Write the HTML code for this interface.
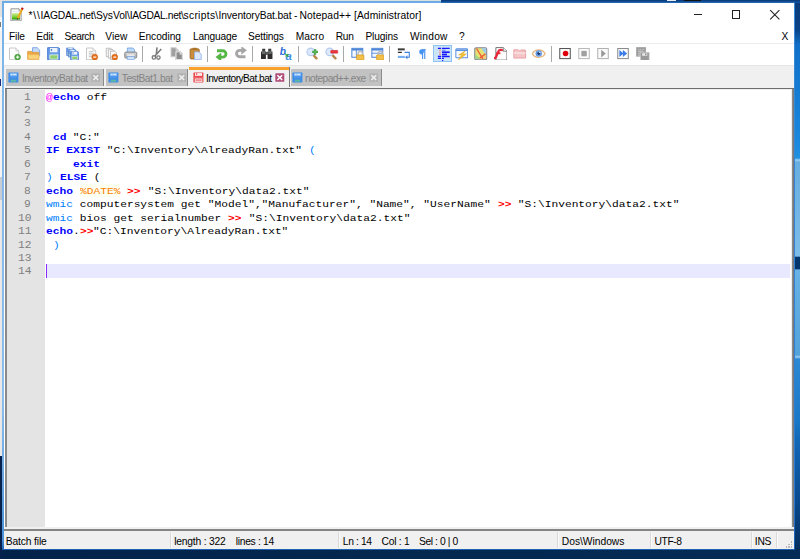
<!DOCTYPE html>
<html><head><meta charset="utf-8"><title>Notepad++</title><style>
html,body{margin:0;padding:0}
body{width:800px;height:559px;overflow:hidden;position:relative;background:#0e3a70}
#r{position:absolute;left:0;top:0;width:800px;height:559px;overflow:hidden}
#r div,#r span,#r svg{position:absolute}
.t{white-space:pre;line-height:0}
.s{font-family:"Liberation Sans",sans-serif}
.m{font-family:"Liberation Mono",monospace}
</style></head><body><div id="r">
<div style="left:0px;top:0px;width:800px;height:559px;background:linear-gradient(180deg,#0a3a78 0px,#0a4488 30px,#1070c8 45px,#1a88dc 140px,#2090e0 158px,#a0d0f0 160px,#68aee0 162px,#7cbce8 256px,#04366e 257.5px,#04366e 268.5px,#68b2e4 270px,#52a2da 355px,#9cccf0 357px,#2a88d4 359px,#1a78c8 420px,#1268b8 440px,#0a4a90 500px,#063468 540px,#04264e 559px);"></div>
<div style="left:0px;top:548px;width:800px;height:11px;background:linear-gradient(90deg,#03224a 0px,#04284f 400px,#052c56 800px);"></div>
<div style="left:0px;top:0px;width:441px;height:3px;background:#dedede;"></div>
<div style="left:441px;top:0px;width:359px;height:3px;background:linear-gradient(180deg,#0a3a78,#0e56a8);"></div>
<div style="left:667px;top:0px;width:9px;height:1.6px;background:#e8eef4;"></div>
<div style="left:684px;top:0px;width:17px;height:1.6px;background:#101010;"></div>
<div style="left:0px;top:0px;width:3px;height:17px;background:#e2e2e2;"></div>
<div style="left:0px;top:17px;width:3px;height:14px;background:#fafafa;"></div>
<div style="left:0.2px;top:22px;width:1.3px;height:4.6px;background:#7a7a7a;"></div>
<div style="left:0px;top:31px;width:3px;height:146px;background:#f4f4f4;"></div>
<div style="left:0px;top:78.5px;width:1.3px;height:7px;background:#1a2a80;"></div>
<div style="left:0px;top:177px;width:3px;height:23px;background:#c8ccd4;"></div>
<div style="left:0px;top:200px;width:3px;height:255.5px;background:#e8e8e8;"></div>
<div style="left:0px;top:455.5px;width:3px;height:104px;background:#06224c;"></div>
<div style="left:2.1px;top:1.4px;width:792.9px;height:549.0px;background:linear-gradient(180deg,#6cace6 0px,#80b6e8 60px,#8cbeec 400px,#4a90d8 540px,#1a60b0 549px);"></div>
<div style="left:441px;top:1.3px;width:354px;height:1.8px;background:linear-gradient(180deg,#0a3f80,#2f74c0);"></div>
<div style="left:3.9px;top:3.0px;width:790.0px;height:546.0px;background:#ffffff;"></div>
<div style="left:793.9px;top:3px;width:1.1px;height:546px;background:linear-gradient(180deg,#3a8adc,#2a7ad0 500px,#1a60b0);"></div>
<div style="left:693.8px;top:14.1px;width:8.6px;height:1px;background:#222;"></div>
<div style="left:731.8px;top:10px;width:8.4px;height:8.8px;background:transparent;border:1px solid #222;box-sizing:border-box"></div>
<svg style="left:768px;top:8px" width="14" height="14" viewBox="0 0 14 14"><path d="M2.2 2.2 L11.4 11.4 M11.4 2.2 L2.2 11.4" stroke="#222" stroke-width="1.05" fill="none"/></svg>
<div style="left:3.8px;top:43.0px;width:790.3px;height:0.9px;background:#ececec;"></div>
<div style="left:3.8px;top:65.0px;width:790.3px;height:23px;background:#f0f0f0;"></div>
<div style="left:3.8px;top:64.6px;width:790.3px;height:0.8px;background:#e6e6e6;"></div>
<div style="left:6.0px;top:68.9px;width:97.0px;height:17.2px;background:#c2c2c2;"></div>
<div style="left:103.0px;top:68.9px;width:1.2px;height:17.2px;background:#8a8a8a;"></div>
<div style="left:106.0px;top:68.9px;width:81.0px;height:17.2px;background:#c2c2c2;"></div>
<div style="left:187.0px;top:68.9px;width:1.2px;height:17.2px;background:#8a8a8a;"></div>
<div style="left:189.0px;top:66.6px;width:100.0px;height:21px;background:#f0f0f0;"></div>
<div style="left:189.0px;top:66.8px;width:100.0px;height:3.6px;background:#f8a22c;"></div>
<div style="left:289.0px;top:67px;width:1.2px;height:20px;background:#7a7a7a;"></div>
<div style="left:291.0px;top:68.9px;width:89.60000000000002px;height:17.2px;background:#c2c2c2;"></div>
<div style="left:380.6px;top:68.9px;width:1.2px;height:17.2px;background:#8a8a8a;"></div>
<div style="left:3.9px;top:526.5px;width:790.0px;height:4.2px;background:#f0f0f0;"></div>
<div style="left:5.1px;top:87.5px;width:788.6px;height:439.8px;background:#8a8a8a;"></div>
<div style="left:5.1px;top:87.5px;width:788.6px;height:1.8px;background:#6e6e6e;"></div>
<div style="left:792.6px;top:89.0px;width:1.1px;height:438.3px;background:#7a7a7a;"></div>
<div style="left:7.1px;top:89.3px;width:785.4px;height:438.0px;background:#efefef;"></div>
<div style="left:7.3px;top:89.5px;width:783.7px;height:437.7px;background:#ffffff;"></div>
<div style="left:7.3px;top:89.5px;width:37.7px;height:437.5px;background:#e4e4e4;"></div>
<div style="left:3.6px;top:529.2px;width:790.2px;height:1.7px;background:#848484;"></div>
<div style="left:46.0px;top:264.25px;width:743.8px;height:13.5px;background:#e8e8ff;"></div>
<div style="left:45.9px;top:264.3px;width:1.5px;height:13.4px;background:#8a2cff;"></div>
<div style="left:79.9px;top:183.51999999999998px;width:40.44px;height:13.4px;background:#fcfff0;"></div>
<div style="left:3.9px;top:530.7px;width:790.0px;height:18.4px;background:#f0f0f0;"></div>
<div style="left:170.0px;top:532.4px;width:1px;height:15.8px;background:#d9d9d9;"></div>
<div style="left:171.0px;top:532.4px;width:0.8px;height:15.8px;background:#fafafa;"></div>
<div style="left:338.0px;top:532.4px;width:1px;height:15.8px;background:#d9d9d9;"></div>
<div style="left:339.0px;top:532.4px;width:0.8px;height:15.8px;background:#fafafa;"></div>
<div style="left:557.0px;top:532.4px;width:1px;height:15.8px;background:#d9d9d9;"></div>
<div style="left:558.0px;top:532.4px;width:0.8px;height:15.8px;background:#fafafa;"></div>
<div style="left:650.0px;top:532.4px;width:1px;height:15.8px;background:#d9d9d9;"></div>
<div style="left:651.0px;top:532.4px;width:0.8px;height:15.8px;background:#fafafa;"></div>
<div style="left:750.5px;top:532.4px;width:1px;height:15.8px;background:#d9d9d9;"></div>
<div style="left:751.5px;top:532.4px;width:0.8px;height:15.8px;background:#fafafa;"></div>
<div style="left:775.5px;top:532.4px;width:1px;height:15.8px;background:#d9d9d9;"></div>
<div style="left:776.5px;top:532.4px;width:0.8px;height:15.8px;background:#fafafa;"></div>
<div style="left:790.8px;top:546.3px;width:1.4px;height:1.4px;background:#b8b8b8;"></div>
<div style="left:788.3px;top:546.3px;width:1.4px;height:1.4px;background:#b8b8b8;"></div>
<div style="left:785.8px;top:546.3px;width:1.4px;height:1.4px;background:#b8b8b8;"></div>
<div style="left:790.8px;top:543.8px;width:1.4px;height:1.4px;background:#b8b8b8;"></div>
<div style="left:788.3px;top:543.8px;width:1.4px;height:1.4px;background:#b8b8b8;"></div>
<div style="left:790.8px;top:541.3px;width:1.4px;height:1.4px;background:#b8b8b8;"></div>
<span class="t s" style="left:28.40px;top:16px;font-size:10.3px;color:#000;letter-spacing:0.822px;">*\\</span>
<span class="t s" style="left:40.60px;top:16px;font-size:10.3px;color:#000;letter-spacing:-0.219px;">IAGDAL.net\</span>
<span class="t s" style="left:96.00px;top:16px;font-size:10.3px;color:#000;letter-spacing:-0.078px;">SysVol\</span>
<span class="t s" style="left:129.80px;top:16px;font-size:10.3px;color:#000;letter-spacing:-0.374px;">IAGDAL.net\</span>
<span class="t s" style="left:183.50px;top:16px;font-size:10.3px;color:#000;letter-spacing:0.297px;">scripts\</span>
<span class="t s" style="left:218.50px;top:16px;font-size:10.3px;color:#000;letter-spacing:-0.130px;">InventoryBat.bat</span>
<span class="t s" style="left:291.40px;top:16px;font-size:10.3px;color:#000;letter-spacing:-0.319px;"> - </span>
<span class="t s" style="left:299.60px;top:16px;font-size:10.3px;color:#000;letter-spacing:0.057px;">Notepad++ </span>
<span class="t s" style="left:354.00px;top:16px;font-size:10.3px;color:#000;letter-spacing:0.067px;">[Administrator]</span>
<span class="t s" style="left:9.10px;top:37px;font-size:10.2px;color:#000;letter-spacing:-0.205px;">File</span>
<span class="t s" style="left:36.30px;top:37px;font-size:10.2px;color:#000;letter-spacing:-0.141px;">Edit</span>
<span class="t s" style="left:64.50px;top:37px;font-size:10.2px;color:#000;letter-spacing:-0.414px;">Search</span>
<span class="t s" style="left:105.30px;top:37px;font-size:10.2px;color:#000;letter-spacing:0.023px;">View</span>
<span class="t s" style="left:138.70px;top:37px;font-size:10.2px;color:#000;letter-spacing:-0.023px;">Encoding</span>
<span class="t s" style="left:193.10px;top:37px;font-size:10.2px;color:#000;letter-spacing:-0.166px;">Language</span>
<span class="t s" style="left:248.10px;top:37px;font-size:10.2px;color:#000;letter-spacing:-0.139px;">Settings</span>
<span class="t s" style="left:295.70px;top:37px;font-size:10.2px;color:#000;letter-spacing:0.058px;">Macro</span>
<span class="t s" style="left:335.70px;top:37px;font-size:10.2px;color:#000;letter-spacing:-0.234px;">Run</span>
<span class="t s" style="left:365.40px;top:37px;font-size:10.2px;color:#000;letter-spacing:-0.103px;">Plugins</span>
<span class="t s" style="left:409.90px;top:37px;font-size:10.2px;color:#000;letter-spacing:0.261px;">Window</span>
<span class="t s" style="left:459.00px;top:37px;font-size:10.2px;color:#000;letter-spacing:-0.672px;">?</span>
<span class="t s" style="left:781.50px;top:37px;font-size:10.2px;color:#000;letter-spacing:0.403px;">X</span>
<span class="t s" style="left:21.90px;top:79px;font-size:10.2px;color:#848484;letter-spacing:-0.525px;">InventoryBat.bat</span>
<span class="t s" style="left:121.80px;top:79px;font-size:10.2px;color:#848484;letter-spacing:-0.487px;">TestBat1.bat</span>
<span class="t s" style="left:205.90px;top:79px;font-size:10.2px;color:#000;letter-spacing:-0.525px;">InventoryBat.bat</span>
<span class="t s" style="left:305.00px;top:79px;font-size:10.2px;color:#848484;letter-spacing:-0.568px;">notepad++.exe</span>
<span class="t m" style="left:46.20px;top:98px;font-size:9.6px;color:#ff00ff;transform:scaleX(1.1701);transform-origin:0 0;">@</span>
<span class="t m" style="left:52.94px;top:98px;font-size:9.6px;color:#0000ff;font-weight:bold;transform:scaleX(1.1701);transform-origin:0 0;">echo</span>
<span class="t m" style="left:79.90px;top:98px;font-size:9.6px;color:#000;transform:scaleX(1.1701);transform-origin:0 0;"> off</span>
<span class="t m" style="left:52.94px;top:138px;font-size:9.6px;color:#0000ff;font-weight:bold;transform:scaleX(1.1701);transform-origin:0 0;">cd</span>
<span class="t m" style="left:66.42px;top:138px;font-size:9.6px;color:#000;transform:scaleX(1.1701);transform-origin:0 0;"> &quot;C:&quot;</span>
<span class="t m" style="left:46.20px;top:151px;font-size:9.6px;color:#0000ff;font-weight:bold;transform:scaleX(1.1701);transform-origin:0 0;">IF EXIST</span>
<span class="t m" style="left:100.12px;top:151px;font-size:9.6px;color:#000;transform:scaleX(1.1701);transform-origin:0 0;"> &quot;C:\Inventory\AlreadyRan.txt&quot; </span>
<span class="t m" style="left:309.06px;top:151px;font-size:9.6px;color:#0080ff;transform:scaleX(1.1701);transform-origin:0 0;">(</span>
<span class="t m" style="left:73.16px;top:165px;font-size:9.6px;color:#0000ff;font-weight:bold;transform:scaleX(1.1701);transform-origin:0 0;">exit</span>
<span class="t m" style="left:46.20px;top:178px;font-size:9.6px;color:#0080ff;transform:scaleX(1.1701);transform-origin:0 0;">)</span>
<span class="t m" style="left:59.68px;top:178px;font-size:9.6px;color:#0000ff;font-weight:bold;transform:scaleX(1.1701);transform-origin:0 0;">ELSE</span>
<span class="t m" style="left:86.64px;top:178px;font-size:9.6px;color:#000;transform:scaleX(1.1701);transform-origin:0 0;"> (</span>
<span class="t m" style="left:46.20px;top:192px;font-size:9.6px;color:#0000ff;font-weight:bold;transform:scaleX(1.1701);transform-origin:0 0;">echo</span>
<span class="t m" style="left:79.90px;top:192px;font-size:9.6px;color:#ff8000;transform:scaleX(1.1701);transform-origin:0 0;">%DATE%</span>
<span class="t m" style="left:127.08px;top:192px;font-size:9.6px;color:#ff0000;font-weight:bold;transform:scaleX(1.1701);transform-origin:0 0;">&gt;&gt;</span>
<span class="t m" style="left:140.56px;top:192px;font-size:9.6px;color:#000;transform:scaleX(1.1701);transform-origin:0 0;"> &quot;S:\Inventory\data2.txt&quot;</span>
<span class="t m" style="left:46.20px;top:205px;font-size:9.6px;color:#0080ff;transform:scaleX(1.1701);transform-origin:0 0;">wmic</span>
<span class="t m" style="left:73.16px;top:205px;font-size:9.6px;color:#000;transform:scaleX(1.1701);transform-origin:0 0;"> computersystem get &quot;Model&quot;,&quot;Manufacturer&quot;, &quot;Name&quot;, &quot;UserName&quot; </span>
<span class="t m" style="left:497.78px;top:205px;font-size:9.6px;color:#ff0000;font-weight:bold;transform:scaleX(1.1701);transform-origin:0 0;">&gt;&gt;</span>
<span class="t m" style="left:511.26px;top:205px;font-size:9.6px;color:#000;transform:scaleX(1.1701);transform-origin:0 0;"> &quot;S:\Inventory\data2.txt&quot;</span>
<span class="t m" style="left:46.20px;top:219px;font-size:9.6px;color:#0080ff;transform:scaleX(1.1701);transform-origin:0 0;">wmic</span>
<span class="t m" style="left:73.16px;top:219px;font-size:9.6px;color:#000;transform:scaleX(1.1701);transform-origin:0 0;"> bios get serialnumber </span>
<span class="t m" style="left:228.18px;top:219px;font-size:9.6px;color:#ff0000;font-weight:bold;transform:scaleX(1.1701);transform-origin:0 0;">&gt;&gt;</span>
<span class="t m" style="left:241.66px;top:219px;font-size:9.6px;color:#000;transform:scaleX(1.1701);transform-origin:0 0;"> &quot;S:\Inventory\data2.txt&quot;</span>
<span class="t m" style="left:46.20px;top:232px;font-size:9.6px;color:#0000ff;font-weight:bold;transform:scaleX(1.1701);transform-origin:0 0;">echo</span>
<span class="t m" style="left:73.16px;top:232px;font-size:9.6px;color:#000;transform:scaleX(1.1701);transform-origin:0 0;">.</span>
<span class="t m" style="left:79.90px;top:232px;font-size:9.6px;color:#ff0000;font-weight:bold;transform:scaleX(1.1701);transform-origin:0 0;">&gt;&gt;</span>
<span class="t m" style="left:93.38px;top:232px;font-size:9.6px;color:#000;transform:scaleX(1.1701);transform-origin:0 0;">&quot;C:\Inventory\AlreadyRan.txt&quot;</span>
<span class="t m" style="left:52.94px;top:246px;font-size:9.6px;color:#0080ff;transform:scaleX(1.1701);transform-origin:0 0;">)</span>
<span class="t m" style="left:24.26px;top:97px;font-size:11.8px;color:#808080;transform:scaleX(0.9520);transform-origin:0 0;">1</span>
<span class="t m" style="left:24.26px;top:110px;font-size:11.8px;color:#808080;transform:scaleX(0.9520);transform-origin:0 0;">2</span>
<span class="t m" style="left:24.26px;top:123px;font-size:11.8px;color:#808080;transform:scaleX(0.9520);transform-origin:0 0;">3</span>
<span class="t m" style="left:24.26px;top:137px;font-size:11.8px;color:#808080;transform:scaleX(0.9520);transform-origin:0 0;">4</span>
<span class="t m" style="left:24.26px;top:150px;font-size:11.8px;color:#808080;transform:scaleX(0.9520);transform-origin:0 0;">5</span>
<span class="t m" style="left:24.26px;top:164px;font-size:11.8px;color:#808080;transform:scaleX(0.9520);transform-origin:0 0;">6</span>
<span class="t m" style="left:24.26px;top:177px;font-size:11.8px;color:#808080;transform:scaleX(0.9520);transform-origin:0 0;">7</span>
<span class="t m" style="left:24.26px;top:191px;font-size:11.8px;color:#808080;transform:scaleX(0.9520);transform-origin:0 0;">8</span>
<span class="t m" style="left:24.26px;top:204px;font-size:11.8px;color:#808080;transform:scaleX(0.9520);transform-origin:0 0;">9</span>
<span class="t m" style="left:17.52px;top:218px;font-size:11.8px;color:#808080;transform:scaleX(0.9520);transform-origin:0 0;">10</span>
<span class="t m" style="left:17.52px;top:231px;font-size:11.8px;color:#808080;transform:scaleX(0.9520);transform-origin:0 0;">11</span>
<span class="t m" style="left:17.52px;top:245px;font-size:11.8px;color:#808080;transform:scaleX(0.9520);transform-origin:0 0;">12</span>
<span class="t m" style="left:17.52px;top:258px;font-size:11.8px;color:#808080;transform:scaleX(0.9520);transform-origin:0 0;">13</span>
<span class="t m" style="left:17.52px;top:271px;font-size:11.8px;color:#808080;transform:scaleX(0.9520);transform-origin:0 0;">14</span>
<span class="t s" style="left:5.80px;top:542px;font-size:10.3px;color:#000;letter-spacing:-0.156px;">Batch file</span>
<span class="t s" style="left:174.20px;top:542px;font-size:10.3px;color:#000;letter-spacing:-0.202px;">length : 322</span>
<span class="t s" style="left:235.80px;top:542px;font-size:10.3px;color:#000;letter-spacing:-0.322px;">lines : 14</span>
<span class="t s" style="left:342.80px;top:542px;font-size:10.3px;color:#000;letter-spacing:-0.386px;">Ln : 14</span>
<span class="t s" style="left:381.60px;top:542px;font-size:10.3px;color:#000;letter-spacing:-0.281px;">Col : 1</span>
<span class="t s" style="left:419.00px;top:542px;font-size:10.3px;color:#000;letter-spacing:-0.412px;">Sel : 0 | 0</span>
<span class="t s" style="left:561.80px;top:542px;font-size:10.3px;color:#000;letter-spacing:-0.032px;">Dos\Windows</span>
<span class="t s" style="left:654.60px;top:542px;font-size:10.3px;color:#000;letter-spacing:-0.434px;">UTF-8</span>
<span class="t s" style="left:754.80px;top:542px;font-size:10.3px;color:#000;letter-spacing:-0.257px;">INS</span>
<div style="left:142.1781px;top:46.0px;width:1.0px;height:16.0px;background:#a8a8a8;"></div>
<div style="left:207.0198px;top:46.0px;width:1.0px;height:16.0px;background:#a8a8a8;"></div>
<div style="left:252.4932px;top:46.0px;width:1.0px;height:16.0px;background:#a8a8a8;"></div>
<div style="left:297.96659999999997px;top:46.0px;width:1.0px;height:16.0px;background:#a8a8a8;"></div>
<div style="left:343.43999999999994px;top:46.0px;width:1.0px;height:16.0px;background:#a8a8a8;"></div>
<div style="left:388.9133999999999px;top:46.0px;width:1.0px;height:16.0px;background:#a8a8a8;"></div>
<div style="left:550.5965999999999px;top:46.0px;width:1.0px;height:16.0px;background:#a8a8a8;"></div>
<div style="left:432.6867999999999px;top:44.6px;width:19.368299999999998px;height:17.6px;background:#cce4f7;border:1px solid #8fc4f2;box-sizing:border-box"></div>
<svg style="left:7.85px;top:47.00px" width="13.47" height="13.47" viewBox="0 0 16 16"><path d="M1.8 1.2h7.6l3.4 3.4v10.4h-11z" fill="#fdfdfd" stroke="#bdbdbd"/><path d="M9.4 1.2v3.4h3.4" fill="#f0f0f0" stroke="#c4c4c4" stroke-width=".8"/><circle cx="11.4" cy="12" r="3.5" fill="#4aa63e" stroke="#3a8c34" stroke-width=".6"/><path d="M11.4 10v4M9.4 12h4" stroke="#e4f4dc" stroke-width="1.5"/></svg>
<svg style="left:27.22px;top:47.00px" width="13.47" height="13.47" viewBox="0 0 16 16"><path d="M6.600 .8h5.600l2.800 2.800v7h-8.400z" fill="#c6daf6" stroke="#6f9ee0"/><path d="M.8 5.200h4.800l1.200 1.400h7.200v8h-13.200z" fill="#eea848" stroke="#dc9430" stroke-width=".9"/><path d="M1.200 9.200h13.200l-.6 5.200h-12.400z" fill="#fad47c" stroke="#f0b850" stroke-width=".6"/></svg>
<svg style="left:46.58px;top:47.00px" width="13.47" height="13.47" viewBox="0 0 16 16"><path d="M.8 .8h13l1.400 1.400v13h-14.400z" fill="#6a9ee8" stroke="#4274cc" stroke-width="1.100"/><rect x="3.600" y="1.200" width="8.800" height="5" fill="#eef3fb"/><rect x="4.600" y="2.400" width="1.600" height="2.400" fill="#5a8cdc"/><rect x="3.400" y="9.400" width="9.400" height="5" fill="#8ed070" stroke="#eaf4ea" stroke-width=".9"/></svg>
<svg style="left:65.95px;top:47.00px" width="13.47" height="13.47" viewBox="0 0 16 16"><g transform="translate(.2,.6) scale(.62)"><path d="M.8 .8h13l1.400 1.400v13h-14.400z" fill="#6a9ee8" stroke="#4274cc" stroke-width="1.100"/><rect x="3.600" y="1.200" width="8.800" height="5" fill="#eef3fb"/><rect x="4.600" y="2.400" width="1.600" height="2.400" fill="#5a8cdc"/><rect x="3.400" y="9.400" width="9.400" height="5" fill="#8ed070" stroke="#eaf4ea" stroke-width=".9"/></g><g transform="translate(2.400,2.600) scale(.62)"><path d="M.8 .8h13l1.400 1.400v13h-14.400z" fill="#6a9ee8" stroke="#4274cc" stroke-width="1.100"/><rect x="3.600" y="1.200" width="8.800" height="5" fill="#eef3fb"/><rect x="4.600" y="2.400" width="1.600" height="2.400" fill="#5a8cdc"/><rect x="3.400" y="9.400" width="9.400" height="5" fill="#8ed070" stroke="#eaf4ea" stroke-width=".9"/></g><g transform="translate(4.800,4.800) scale(.68)"><path d="M.8 .8h13l1.400 1.400v13h-14.400z" fill="#6a9ee8" stroke="#4274cc" stroke-width="1.100"/><rect x="3.600" y="1.200" width="8.800" height="5" fill="#eef3fb"/><rect x="4.600" y="2.400" width="1.600" height="2.400" fill="#5a8cdc"/><rect x="3.400" y="9.400" width="9.400" height="5" fill="#8ed070" stroke="#eaf4ea" stroke-width=".9"/></g></svg>
<svg style="left:85.32px;top:47.00px" width="13.47" height="13.47" viewBox="0 0 16 16"><path d="M1.8 1.2h7.6l3.4 3.4v10.4h-11z" fill="#fdfdfd" stroke="#bdbdbd"/><path d="M9.4 1.2v3.4h3.4" fill="#f0f0f0" stroke="#c4c4c4" stroke-width=".8"/><path d="M4.5 5.5h5M4.5 7.5h6M4.5 9.5h6M4.5 11.5h4" stroke="#b5b5b5" stroke-width=".9"/><circle cx="11.600" cy="12" r="3.500" fill="#e8701a" stroke="#cc5a10" stroke-width=".7"/><path d="M9.800 12h3.600" stroke="#fff" stroke-width="1.300"/></svg>
<svg style="left:104.69px;top:47.00px" width="13.47" height="13.47" viewBox="0 0 16 16"><path d="M1.5 1.5h5.5l2 2v8h-7.5z" fill="#fcfcfc" stroke="#b4b4b4"/><path d="M4 3.2h5.5l2 2v8h-7.5z" fill="#fcfcfc" stroke="#b4b4b4"/><path d="M6.5 5h5l2 2v8h-7z" fill="#fcfcfc" stroke="#b4b4b4"/><circle cx="11.600" cy="12" r="3.500" fill="#e8701a" stroke="#cc5a10" stroke-width=".7"/><path d="M9.800 12h3.600" stroke="#fff" stroke-width="1.300"/></svg>
<svg style="left:124.06px;top:47.00px" width="13.47" height="13.47" viewBox="0 0 16 16"><path d="M4 1.2h6.5l2 2v4h-8.5z" fill="#bcd8fa" stroke="#6fa2e6"/><rect x=".8" y="6" width="14.400" height="7.200" rx="1.400" fill="#b4b4b4" stroke="#858585"/><path d="M1.600 8h12.800" stroke="#d8d8d8" stroke-width="1.200"/><rect x="3.4" y="8.6" width="9.2" height="2.2" fill="#e9e9e9"/><rect x="3.8" y="11.4" width="8.4" height="3.4" fill="#cfe2fa" stroke="#7aa6e0" stroke-width=".8"/></svg>
<svg style="left:150.16px;top:47.00px" width="13.47" height="13.47" viewBox="0 0 16 16"><path d="M8.300 .4L7.500 9.400M13.400 2.400L5.800 10.600" stroke="#7c7c7c" stroke-width="1.900" fill="none"/><circle cx="4.600" cy="12.400" r="2" fill="none" stroke="#7c7c7c" stroke-width="1.600"/><circle cx="10" cy="12.600" r="2" fill="none" stroke="#7c7c7c" stroke-width="1.600"/></svg>
<svg style="left:169.53px;top:47.00px" width="13.47" height="13.47" viewBox="0 0 16 16"><path d="M1.200 1h5.800l3.200 3.200v7.400h-9z" fill="#a0a0a0" stroke="#cdcdcd" stroke-width="1.200"/><path d="M7 1v3.200h3.200" fill="#d0d0d0" stroke="#cdcdcd" stroke-width=".7"/><path d="M6.200 4.800h6l3.400 3.400v7.600h-9.400z" fill="#bdbdbd"/><path d="M7.200 5.800h4.600l2.800 2.800v6.200h-7.400z" fill="#8c8c8c" stroke="#f2f2f2" stroke-width="1"/><path d="M11.800 5.800v2.800h2.800" fill="#c8c8c8" stroke="#f2f2f2" stroke-width=".6"/></svg>
<svg style="left:188.90px;top:47.00px" width="13.47" height="13.47" viewBox="0 0 16 16"><rect x="1.3" y="2.2" width="10.8" height="12" rx="1.2" fill="#c98b3c" stroke="#9b6420"/><rect x="4" y="1" width="5.4" height="2.6" rx=".8" fill="#a9742c"/><path d="M6.5 5.8h5.2l2.8 2.8v6.4h-8z" fill="#dbe8fb" stroke="#8fb3ea"/></svg>
<svg style="left:215.00px;top:47.00px" width="13.47" height="13.47" viewBox="0 0 16 16"><path d="M2.400 4.400h6.800a3.800 3.800 0 0 1 0 7.600h-3" fill="none" stroke="#56b646" stroke-width="3.400"/><path d="M7.200 7.200v9.600l-6.200-4.800z" fill="#56b646" stroke="#3c9a30" stroke-width=".4"/></svg>
<svg style="left:234.37px;top:47.00px" width="13.47" height="13.47" viewBox="0 0 16 16"><g transform="rotate(180 8 8)"><path d="M2.400 4.400h6.800a3.800 3.800 0 0 1 0 7.600h-3" fill="none" stroke="#a6a6a6" stroke-width="3.400"/><path d="M7.200 7.200v9.600l-6.200-4.800z" fill="#a6a6a6" stroke="#a6a6a6" stroke-width=".4"/></g></svg>
<svg style="left:260.48px;top:47.00px" width="13.47" height="13.47" viewBox="0 0 16 16"><path d="M2.6 2.2h3.6v3.2h-3.6zM9.8 2.2h3.6v3.2h-3.6z" fill="#3a3a3a"/><path d="M1.2 5.4h5.8v8.8h-5.8zM9 5.4h5.8v8.8h-5.8z" fill="#2e2e2e"/><rect x="6.6" y="5.8" width="2.8" height="3.6" fill="#555"/><path d="M2.2 7.2h3.8M10 7.2h3.8" stroke="#9aa" stroke-width="1.2"/></svg>
<svg style="left:279.85px;top:47.00px" width="13.47" height="13.47" viewBox="0 0 16 16"><text x="-.2" y="9" font-family="Liberation Sans, sans-serif" font-weight="bold" font-style="italic" font-size="12" fill="#2a6ad8">b</text><text x="6.600" y="16" font-family="Liberation Sans, sans-serif" font-weight="bold" font-style="italic" font-size="13.500" fill="#4290ea">a</text><path d="M5.800 7.600l3 3M9.200 8v2.800h-2.800" stroke="#3aa04a" stroke-width="1.300" fill="none"/></svg>
<svg style="left:305.95px;top:47.00px" width="13.47" height="13.47" viewBox="0 0 16 16"><path d="M9 9.800l3.400 3.600" stroke="#b8864a" stroke-width="3" stroke-linecap="round"/><circle cx="5.600" cy="5.800" r="4.500" fill="#dce9fb" stroke="#b4cbee" stroke-width="1.300"/><path d="M10.800 2.600v6.600M7.500 5.900h6.600" stroke="#3a963a" stroke-width="2.700"/><path d="M10.800 3.200v5.400M8.100 5.900h5.400" stroke="#58bc58" stroke-width="1.500"/></svg>
<svg style="left:325.32px;top:47.00px" width="13.47" height="13.47" viewBox="0 0 16 16"><path d="M9 9.800l3.400 3.600" stroke="#b8864a" stroke-width="3" stroke-linecap="round"/><circle cx="5.600" cy="5.800" r="4.500" fill="#dce9fb" stroke="#b4cbee" stroke-width="1.300"/><rect x="6.800" y="4" width="8.400" height="3.400" rx=".5" fill="#e8363e" stroke="#c8242c" stroke-width=".5"/></svg>
<svg style="left:351.42px;top:47.00px" width="13.47" height="13.47" viewBox="0 0 16 16"><rect x="1" y="1.6" width="13" height="10.6" fill="#f4f8fe" stroke="#4f86d6" stroke-width="1.2"/><path d="M1 3.2h13" stroke="#4f86d6" stroke-width="2"/><path d="M6.4 3v9" stroke="#4f86d6" stroke-width="1"/><path d="M8.4 9.6v-1.8a2.6 2.6 0 0 1 5.2 0v1.8" fill="none" stroke="#b9b9b9" stroke-width="1.4"/><rect x="6.6" y="9.4" width="8.8" height="6" rx=".8" fill="#f2c04a" stroke="#d99a1c" stroke-width=".8"/></svg>
<svg style="left:370.79px;top:47.00px" width="13.47" height="13.47" viewBox="0 0 16 16"><rect x="1" y="1.6" width="13" height="10.6" fill="#f4f8fe" stroke="#4f86d6" stroke-width="1.2"/><path d="M1 3.2h13" stroke="#4f86d6" stroke-width="2"/><path d="M1 7.4h13" stroke="#4f86d6" stroke-width="1"/><path d="M8.4 9.6v-1.8a2.6 2.6 0 0 1 5.2 0v1.8" fill="none" stroke="#b9b9b9" stroke-width="1.4"/><rect x="6.6" y="9.4" width="8.8" height="6" rx=".8" fill="#f2c04a" stroke="#d99a1c" stroke-width=".8"/></svg>
<svg style="left:396.90px;top:47.00px" width="13.47" height="13.47" viewBox="0 0 16 16"><path d="M1 2.800h8.200" stroke="#3c3c3c" stroke-width="2.400"/><path d="M1 6.400h4.800" stroke="#2c2c2c" stroke-width="1.500"/><path d="M1 11.800h8.400" stroke="#78aef2" stroke-width="2.600"/><path d="M9 6.400h5.600v5.800h-2.600" fill="none" stroke="#3f7fe0" stroke-width="1.300"/><path d="M12.400 9.800l-2.800 2.400 2.800 2.400z" fill="#3f7fe0"/></svg>
<svg style="left:416.27px;top:47.00px" width="13.47" height="13.47" viewBox="0 0 16 16"><path d="M10.400 2.800v11.600M7.800 2.800v11.600" stroke="#4a94f2" stroke-width="1.400"/><path d="M11.400 2.900h-4.400a2.900 2.900 0 0 0 0 5.800h.8" fill="#4a94f2" stroke="#4a94f2" stroke-width=".8"/></svg>
<svg style="left:455.00px;top:47.00px" width="13.47" height="13.47" viewBox="0 0 16 16"><rect x="1" y="2.200" width="14" height="10.600" rx="1" fill="#f8fafe" stroke="#5a90e0" stroke-width="1.200"/><path d="M1 3.800h14" stroke="#5a90e0" stroke-width="2"/><path d="M12 4.800l-7.600 4.600h3.400l-3.800 6 9.400-7h-4z" fill="#f2c83c" stroke="#e0a820" stroke-width=".7"/></svg>
<svg style="left:474.37px;top:47.00px" width="13.47" height="13.47" viewBox="0 0 16 16"><rect x=".9" y=".9" width="14.200" height="14.200" rx="1.600" fill="#e6e272" stroke="#84849a" stroke-width="1.300"/><path d="M8.600 1.600h5.800v8z" fill="#9ccdf0"/><path d="M1.600 8.600l5.600 5.800h-5.600z" fill="#98d888"/><path d="M9 14.400l5.400-4.400v4.400z" fill="#f0c878"/><path d="M3 1.800l7.600 12.400M13.600 8.200l-6.800 5" stroke="#ee5a3a" stroke-width="1.600" fill="none"/></svg>
<svg style="left:493.74px;top:47.00px" width="13.47" height="13.47" viewBox="0 0 16 16"><path d="M2.200 .7h8.800l4.400 4.400v10.500h-13.200z" fill="#fdfdfb" stroke="#6e6e6e" stroke-width="1.100"/><path d="M11 .7v4.400h4.400" fill="#ececec" stroke="#6e6e6e" stroke-width=".9"/><path d="M9.400 3.600c-2.400-.8-3.500.2-4.300 1.900l-2.700 6.300c-.5 1.200-1.400 1.600-2.400 1.200" fill="none" stroke="#e8283c" stroke-width="2.700" stroke-linecap="round"/><path d="M2.600 7.400h5" stroke="#e8283c" stroke-width="2.200"/></svg>
<svg style="left:513.11px;top:47.00px" width="13.47" height="13.47" viewBox="0 0 16 16"><path d="M1 3.2h5l1.2 1.4h7.8v8.6h-14z" fill="#f4c6c8" stroke="#e59aa0" stroke-width="1"/><path d="M1.400 7.200h13.200" stroke="#fbe6e6" stroke-width="1.600"/><path d="M9 3.400h5.400v1.600" fill="none" stroke="#e59aa0" stroke-width=".9"/></svg>
<svg style="left:532.48px;top:47.00px" width="13.47" height="13.47" viewBox="0 0 16 16"><path d="M.4 8c3.200-6 12-6 15.200 0c-3.200 5.600-12 5.600-15.200 0z" fill="#f8f8fa" stroke="#e6b478" stroke-width="1.500"/><circle cx="8" cy="7.800" r="3.800" fill="#6a9ce0"/><circle cx="8" cy="7.800" r="1.700" fill="#1c3670"/><circle cx="9.300" cy="6.400" r=".8" fill="#fff"/></svg>
<svg style="left:558.58px;top:47.00px" width="13.47" height="13.47" viewBox="0 0 16 16"><rect x=".9" y="1.8" width="12.500" height="12" fill="#fbfbfb" stroke="#555" stroke-width="1.200"/><circle cx="7.800" cy="7.8" r="3.3" fill="#e0000c"/></svg>
<svg style="left:577.95px;top:47.00px" width="13.47" height="13.47" viewBox="0 0 16 16"><rect x=".9" y="1.8" width="12.500" height="12" fill="#fbfbfb" stroke="#b9b9b9" stroke-width="1.200"/><rect x="4" y="4.600" width="6.400" height="6.400" fill="#a0a0a0"/></svg>
<svg style="left:597.32px;top:47.00px" width="13.47" height="13.47" viewBox="0 0 16 16"><rect x=".9" y="1.8" width="12.500" height="12" fill="#fbfbfb" stroke="#b0b0b0" stroke-width="1.200"/><path d="M5 3.200l5.400 4.600-5.400 4.600z" fill="#989898"/></svg>
<svg style="left:616.69px;top:47.00px" width="13.47" height="13.47" viewBox="0 0 16 16"><rect x=".9" y="1.8" width="12.500" height="12" fill="#fbfbfb" stroke="#8a8a8a" stroke-width="1.200"/><path d="M2.800 3.600l5 4.200-5 4.200zM7 3.600l5 4.200-5 4.200z" fill="#3a7be8"/></svg>
<svg style="left:636.05px;top:47.00px" width="13.47" height="13.47" viewBox="0 0 16 16"><rect x=".2" y=".2" width="11.600" height="11.200" fill="#9d9d9d"/><path d="M2.400 3.200h7.600M2.400 5.600h7.600M2.400 8h3.200M2.400 10.200h3.200M4.400 4.400v7M7 4.400v2" stroke="#d8d8d8" stroke-width=".9" stroke-dasharray="1.400 .7"/><rect x="5.400" y="6.400" width="10.200" height="9.400" fill="#9a9a9a" stroke="#c8c8c8" stroke-width=".7"/><rect x="7.400" y="7.400" width="6" height="3" fill="#ececec"/><rect x="10.800" y="7.800" width="1.600" height="2" fill="#888"/></svg>
<svg style="left:433px;top:44px" width="20" height="19" viewBox="433 44 20 19"><g stroke="#1818ff" fill="none"><path d="M437.900 48.450h3.200M442 48.450h7.700" stroke-width="1.300"/><path d="M442 50.200h3.600" stroke="#6a86fa" stroke-width="1.200"/><path d="M442 52.200h7.700" stroke-width="1.700"/><path d="M442 54.500h5" stroke-width="1.700"/><path d="M437.900 56.500h3.200M442 56.500h7.700" stroke-width="1.300"/><path d="M437.900 58.400h3.200M442 58.400h2" stroke-width="1.300"/><path d="M442 60.500h1.200" stroke-width="1.200"/></g><path d="M440 49.400v6.600" stroke="#f08890" stroke-width="1.500" stroke-dasharray="1.300 .8"/></svg>
<svg style="left:8.30px;top:72.20px" width="10.8" height="11" viewBox="0 0 16 16" preserveAspectRatio="none"><rect x=".6" y=".6" width="14.8" height="14.8" rx="1.2" fill="#3c8ce8"/><rect x="3" y="1.6" width="10.4" height="4.6" fill="#86bcf6"/><path d="M4 3.6h2M7 3.6h5" stroke="#d8eafc" stroke-width="1.6"/><rect x="4" y="11.2" width="8.2" height="3" fill="#5cb8a6"/><path d="M3 8.4h10" stroke="#5aa2f0" stroke-width="1"/></svg>
<svg style="left:90.80px;top:73.00px" width="9.6" height="9.2" viewBox="0 0 12 11.5"><rect x=".4" y=".4" width="11.200" height="10.700" rx=".8" fill="#b2b2b2"/><path d="M3 2.800l6 6M9 2.800l-6 6" stroke="#f0f0f0" stroke-width="2"/></svg>
<svg style="left:108.20px;top:72.20px" width="10.8" height="11" viewBox="0 0 16 16" preserveAspectRatio="none"><rect x=".6" y=".6" width="14.8" height="14.8" rx="1.2" fill="#3c8ce8"/><rect x="3" y="1.6" width="10.4" height="4.6" fill="#86bcf6"/><path d="M4 3.6h2M7 3.6h5" stroke="#d8eafc" stroke-width="1.6"/><rect x="4" y="11.2" width="8.2" height="3" fill="#5cb8a6"/><path d="M3 8.4h10" stroke="#5aa2f0" stroke-width="1"/></svg>
<svg style="left:176.60px;top:73.00px" width="9.6" height="9.2" viewBox="0 0 12 11.5"><rect x=".4" y=".4" width="11.200" height="10.700" rx=".8" fill="#b2b2b2"/><path d="M3 2.800l6 6M9 2.800l-6 6" stroke="#f0f0f0" stroke-width="2"/></svg>
<svg style="left:193.00px;top:72.20px" width="10.8" height="11" viewBox="0 0 16 16" preserveAspectRatio="none"><rect x=".6" y=".6" width="14.8" height="14.8" rx="1.2" fill="#e8484e"/><rect x="3" y="1.6" width="10.4" height="4" fill="#fdecec"/><rect x="4.6" y="1.6" width="1.6" height="2.6" fill="#e8484e"/><rect x="3.2" y="10" width="10" height="4" fill="#f08a8e" stroke="#fdeaea" stroke-width="1.1"/><path d="M1 8h14" stroke="#f06a70" stroke-width="1"/></svg>
<svg style="left:275.40px;top:73.00px" width="9.6" height="9.2" viewBox="0 0 12 11.5"><rect x=".4" y=".4" width="11.200" height="10.700" rx=".8" fill="#b04c78"/><path d="M3 2.800l6 6M9 2.800l-6 6" stroke="#ffffff" stroke-width="2"/></svg>
<svg style="left:292.20px;top:72.20px" width="10.8" height="11" viewBox="0 0 16 16" preserveAspectRatio="none"><rect x=".6" y=".6" width="14.8" height="14.8" rx="1.2" fill="#3c8ce8"/><rect x="3" y="1.6" width="10.4" height="4.6" fill="#86bcf6"/><path d="M4 3.6h2M7 3.6h5" stroke="#d8eafc" stroke-width="1.6"/><rect x="4" y="11.2" width="8.2" height="3" fill="#5cb8a6"/><path d="M3 8.4h10" stroke="#5aa2f0" stroke-width="1"/></svg>
<svg style="left:368.80px;top:73.00px" width="9.6" height="9.2" viewBox="0 0 12 11.5"><rect x=".4" y=".4" width="11.200" height="10.700" rx=".8" fill="#b2b2b2"/><path d="M3 2.800l6 6M9 2.800l-6 6" stroke="#f0f0f0" stroke-width="2"/></svg>
<svg style="left:9.8px;top:6.8px" width="14.6" height="14.6" viewBox="0 0 16 16"><path d="M1 2h9l2.200 2.200v11h-11.200z" fill="#fafafa" stroke="#8c8c8c" stroke-width="1"/><path d="M10 2v2.400h2.200" fill="#ddd" stroke="#8c8c8c" stroke-width=".8"/><defs><linearGradient id="gg" x1="0" y1="0" x2="0" y2="1"><stop offset="0" stop-color="#d8f0a0"/><stop offset=".7" stop-color="#66c820"/><stop offset="1" stop-color="#1e8a10"/></linearGradient></defs><rect x="2.200" y="6.600" width="8.800" height="7.200" fill="url(#gg)"/><path d="M2.400 5h8" stroke="#dfe8f4" stroke-width="1.400"/><path d="M13.600 1.600L8.400 12.600" stroke="#f0a81c" stroke-width="2.200"/><path d="M14 .8l-.9 1.900" stroke="#c01020" stroke-width="2.200"/><path d="M8.600 12.200l-.6 1.600" stroke="#444" stroke-width="1.200"/></svg>
</div></body></html>
